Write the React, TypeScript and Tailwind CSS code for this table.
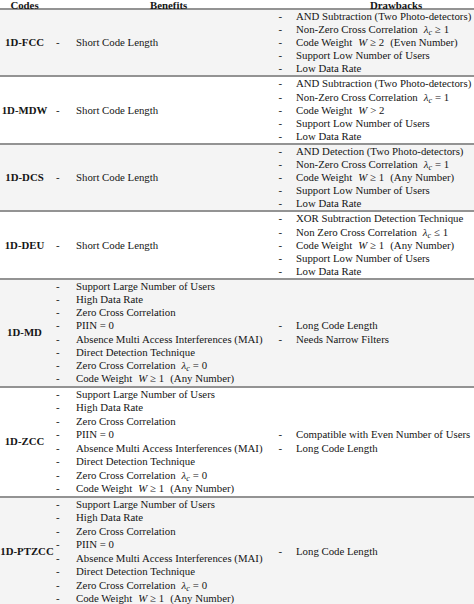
import type { ReactNode } from "react";

const Lc = () => (
  <span className="ml-[6px] mr-[3px]">
    <i>λ</i>
    <sub className="italic">c</sub>
  </span>
);

const W = () => <i className="ml-[6px] mr-[3px]">W</i>;

const goodList: ReactNode[] = [
  "Support Large Number of Users",
  "High Data Rate",
  "Zero Cross Correlation",
  "PIIN = 0",
  "Absence Multi Access Interferences (MAI)",
  "Direct Detection Technique",
  <>Zero Cross Correlation<Lc />= 0</>,
  <>Code Weight<W />≥ 1<span className="ml-[6px]">(Any Number)</span></>,
];

type Row = {
  code: string;
  gray: boolean;
  leading: string;
  benefits: ReactNode[];
  drawbacks: ReactNode[];
};

const rows: Row[] = [
  {
    code: "1D-FCC",
    gray: true,
    leading: "leading-[13.1px]",
    benefits: ["Short Code Length"],
    drawbacks: [
      "AND Subtraction (Two Photo-detectors)",
      <>Non-Zero Cross Correlation<Lc />≥ 1</>,
      <>Code Weight<W />≥ 2<span className="ml-[6px]">(Even Number)</span></>,
      "Support Low Number of Users",
      "Low Data Rate",
    ],
  },
  {
    code: "1D-MDW",
    gray: false,
    leading: "leading-[13.1px]",
    benefits: ["Short Code Length"],
    drawbacks: [
      "AND Subtraction (Two Photo-detectors)",
      <>Non-Zero Cross Correlation<Lc />= 1</>,
      <>Code Weight<W />&gt; 2</>,
      "Support Low Number of Users",
      "Low Data Rate",
    ],
  },
  {
    code: "1D-DCS",
    gray: true,
    leading: "leading-[13.1px]",
    benefits: ["Short Code Length"],
    drawbacks: [
      "AND Detection (Two Photo-detectors)",
      <>Non-Zero Cross Correlation<Lc />= 1</>,
      <>Code Weight<W />≥ 1<span className="ml-[6px]">(Any Number)</span></>,
      "Support Low Number of Users",
      "Low Data Rate",
    ],
  },
  {
    code: "1D-DEU",
    gray: false,
    leading: "leading-[13.1px]",
    benefits: ["Short Code Length"],
    drawbacks: [
      "XOR Subtraction Detection Technique",
      <>Non Zero Cross Correlation<Lc />≤ 1</>,
      <>Code Weight<W />≥ 1<span className="ml-[6px]">(Any Number)</span></>,
      "Support Low Number of Users",
      "Low Data Rate",
    ],
  },
  {
    code: "1D-MD",
    gray: true,
    leading: "leading-[13.2px]",
    benefits: goodList,
    drawbacks: ["Long Code Length", "Needs Narrow Filters"],
  },
  {
    code: "1D-ZCC",
    gray: false,
    leading: "leading-[13.5px]",
    benefits: goodList,
    drawbacks: ["Compatible with Even Number of Users", "Long Code Length"],
  },
  {
    code: "1D-PTZCC",
    gray: true,
    leading: "leading-[13.5px]",
    benefits: goodList,
    drawbacks: ["Long Code Length"],
  },
];

function Item({ children, dash }: { children: ReactNode; dash: string }) {
  return (
    <div className="flex whitespace-nowrap">
      <span className={`${dash} shrink-0`}>-</span>
      <span>{children}</span>
    </div>
  );
}

export default function App() {
  return (
    <main className="w-[474px] h-[604px] overflow-hidden bg-white text-[#151515] font-['Liberation_Serif',serif] text-[10.8px]">
      <div className="grid grid-cols-[49px_229px_260px] h-[10px] border-b-2 border-[#939393] font-bold leading-[12px]">
        <div className="-mt-[1px] text-center">Codes</div>
        <div className="-mt-[1px] pl-[101px]">Benefits</div>
        <div className="-mt-[1px] pl-[92px]">Drawbacks</div>
      </div>

      {rows.map((row) => (
        <div
          key={row.code}
          className={`grid grid-cols-[49px_229px_260px] border-b-2 border-[#939393] ${row.leading} ${row.gray ? "bg-[#f4f4f4]" : "bg-white"}`}
        >
          <div className={`flex items-center justify-center font-bold whitespace-nowrap ${row.code.length > 7 ? "pl-[5px]" : ""}`}>
            {row.code}
          </div>
          <div className="flex flex-col justify-center pl-[7px]">
            {row.benefits.map((b, i) => (
              <Item key={i} dash="w-[20px]">{b}</Item>
            ))}
          </div>
          <div className="flex flex-col justify-center pl-[0.5px]">
            {row.drawbacks.map((d, i) => (
              <Item key={i} dash="w-[17.5px]">{d}</Item>
            ))}
          </div>
        </div>
      ))}
    </main>
  );
}
